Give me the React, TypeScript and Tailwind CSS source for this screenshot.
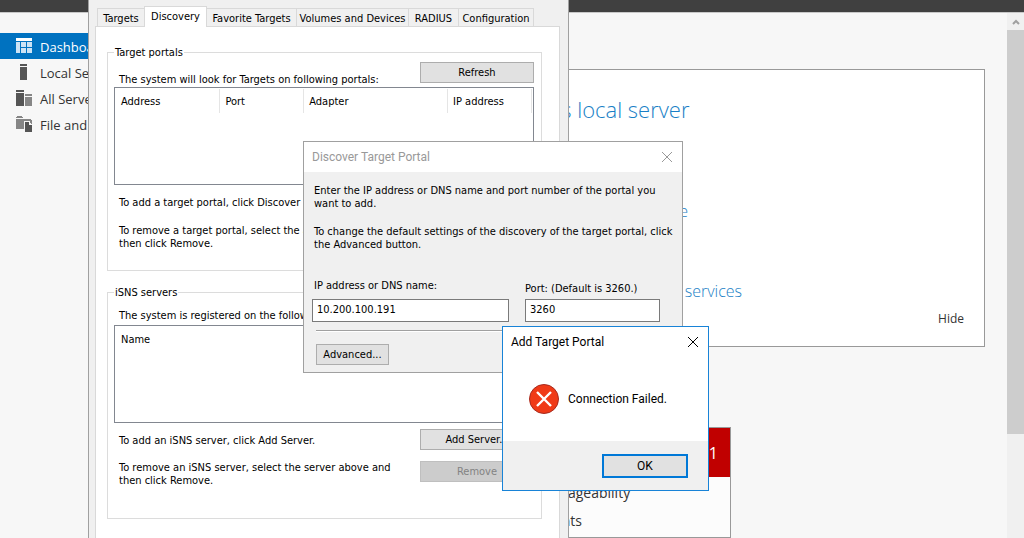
import type { ReactNode } from "react";

const navItems = [
  { label: "Dashboard", icon: "dashboard" },
  { label: "Local Server", icon: "server" },
  { label: "All Servers", icon: "servers" },
  { label: "File and Storage Services", icon: "files" },
];

const tabs = [
  { label: "Targets", width: "w-12" },
  { label: "Discovery", width: "w-[63px]" },
  { label: "Favorite Targets", width: "w-[91px]" },
  { label: "Volumes and Devices", width: "w-[113px]" },
  { label: "RADIUS", width: "w-[51px]" },
  { label: "Configuration", width: "w-[76px]" },
];

const portalColumns = [
  { label: "Address", width: "w-[104px]" },
  { label: "Port", width: "w-[84px]" },
  { label: "Adapter", width: "w-36" },
  { label: "IP address", width: "w-[84px]" },
];

const NavIcon = ({ name }: { name: string }) => (
  <svg className="shrink-0" width="16" height="16" viewBox="0 0 16 16" shapeRendering="crispEdges" aria-hidden="true">
    {name === "dashboard" && (
      <>
        <path fill="#fff" d="M0 0h16v3H0z" />
        <path fill="#cce3f5" d="M0 4h4v11H0zM5 4h5v5H5zM11 4h5v5h-5zM5 10h5v5H5zM11 10h5v5h-5z" />
      </>
    )}
    {name === "server" && <path fill="#555" d="M4 0h7v2H4zM4 3h7v13H4z" />}
    {name === "servers" && (
      <>
        <path fill="#555" d="M0 0h8v2H0zM0 3h8v13H0z" />
        <path fill="#868686" d="M9 4h7v2H9zM9 7h7v9H9z" />
      </>
    )}
    {name === "files" && (
      <>
        <path fill="#868686" d="M1 0h5v1h1v1H0V1h1zM0 3h8v10H0zM8 3h7v1h1v1H8z" />
        <path fill="#555" d="M9 6h4v3h3v7H9z" />
        <path fill="#868686" d="M14 5h2v3h-1V7h-1z" />
      </>
    )}
  </svg>
);

const CloseButton = ({ className }: { className: string }) => (
  <button type="button" aria-label="Close" className={className}>
    <svg width="12" height="12" viewBox="0 0 12 12" fill="none" stroke="currentColor">
      <path d="M1 1l10 10M11 1L1 11" />
    </svg>
  </button>
);

const Button = ({ children, className = "", disabled }: { children: ReactNode; className?: string; disabled?: boolean }) => (
  <button
    type="button"
    disabled={disabled}
    className={`border border-[#adadad] bg-[#e1e1e1] text-center disabled:border-[#bfbfbf] disabled:bg-[#cccccc] disabled:text-[#838383] ${className}`}
  >
    {children}
  </button>
);

const ServerManager = () => (
  <div className="flex h-full flex-col bg-[#f7f7f7] font-['Open_Sans',sans-serif] text-[#333]">
    <header className="h-[13px] border-b border-[#c8c8c8] bg-[#404040]" />
    <div className="flex min-h-0 flex-1">
      <nav className="w-48 shrink-0 pt-5 text-[13px]">
        {navItems.map((item, index) => (
          <a
            key={item.label}
            href="#"
            className={`flex h-[26px] items-center gap-2 pl-4 whitespace-nowrap ${index === 0 ? "bg-[#0072c0] text-white" : ""}`}
          >
            <NavIcon name={item.icon} />
            <span className="pt-0.5">{item.label}</span>
          </a>
        ))}
      </nav>
      <main className="min-w-0 flex-1 pt-14 pr-[22px] pl-4">
        <section className="flex h-[278px] flex-col border border-[#999] bg-white pt-[23px] pr-5 pl-[225px] text-[#1a7fc6]">
          <h1 className="text-[22px] leading-8 font-light whitespace-nowrap">Configure this local server</h1>
          <div className="flex flex-col gap-14 pt-[74px] pl-[45px] text-base leading-6 font-light whitespace-nowrap">
            <a href="#">Add other servers to manage</a>
            <a href="#">Connect this server to cloud services</a>
          </div>
          <button type="button" className="mt-1.5 self-end text-xs leading-5 text-[#333]">
            Hide
          </button>
        </section>
        <section className="mt-20 ml-[300px] w-[223px] border border-[#999] bg-[#fcfcfc]">
          <div className="flex h-[49px] items-center justify-end bg-[#c00000] pr-3 text-base text-white">1</div>
          <ul className="flex flex-col gap-2 py-1.5 pl-[30px] text-sm leading-5">
            <li>Manageability</li>
            <li>Events</li>
          </ul>
        </section>
      </main>
      <div className="w-[17px] shrink-0 bg-[#f0f0f0]">
        <div className="flex h-[17px] items-center justify-center">
          <svg width="8" height="6" viewBox="0 0 8 6" fill="none" stroke="#a0a0a0" strokeWidth="2">
            <path d="M1 5l3-3 3 3" />
          </svg>
        </div>
        <div className="h-[404px] bg-[#cdcdcd]" />
      </div>
    </div>
  </div>
);

const InitiatorWindow = () => (
  <section className="absolute inset-y-0 left-[88px] w-[481px] overflow-hidden border-x border-[#a0a0a0] bg-[#f0f0f0] pt-1.5 pr-2 pl-1.5">
    <div role="tablist" className="relative flex items-end pl-0.5">
      {tabs.map((tab) => (
        <button
          key={tab.label}
          type="button"
          role="tab"
          aria-selected={tab.label === "Discovery"}
          className={`-mr-px flex shrink-0 items-center justify-center border border-b-0 border-[#d9d9d9] whitespace-nowrap ${tab.width} ${
            tab.label === "Discovery" ? "relative z-10 -mb-px h-[21px] bg-white pb-0.5" : "h-[18px] pt-0.5"
          }`}
        >
          {tab.label}
        </button>
      ))}
    </div>
    <div className="flex h-[600px] flex-col gap-[15px] border border-[#d9d9d9] bg-white px-[11px] pt-[19px] pr-[17px]">
      <fieldset className="h-[225px] border border-[#dcdcdc] pr-[7px] pl-1.5">
        <legend className="px-px">Target portals</legend>
        <div className="flex items-start justify-between pt-[3px]">
          <p className="pt-[11px] pl-[5px]">The system will look for Targets on following portals:</p>
          <Button className="h-[21px] w-[114px]">Refresh</Button>
        </div>
        <div className="mt-px h-[98px] border border-[#828790] p-px">
          <table className="table-fixed border-collapse">
            <thead>
              <tr className="h-6">
                {portalColumns.map((column) => (
                  <th key={column.label} className={`border-r border-[#e5e5e5] pl-[5px] text-left font-normal ${column.width}`}>
                    {column.label}
                  </th>
                ))}
              </tr>
            </thead>
          </table>
        </div>
        <p className="pt-[11px] pl-[5px]">To add a target portal, click Discover Portal.</p>
        <p className="pt-[15px] pl-[5px]">
          To remove a target portal, select the address above and
          <br />
          then click Remove.
        </p>
      </fieldset>
      <fieldset className="h-[233px] border border-[#dcdcdc] pr-[7px] pl-1.5">
        <legend className="px-px">iSNS servers</legend>
        <p className="pt-2.5 pl-[5px]">The system is registered on the following iSNS servers:</p>
        <div className="mt-[3px] h-[98px] border border-[#828790] p-px">
          <table>
            <thead>
              <tr className="h-6">
                <th className="pl-[5px] text-left font-normal">Name</th>
              </tr>
            </thead>
          </table>
        </div>
        <div className="flex justify-between pt-1.5 pl-[5px]">
          <div className="flex flex-col gap-3.5 pt-[5px]">
            <p>To add an iSNS server, click Add Server.</p>
            <p>
              To remove an iSNS server, select the server above and
              <br />
              then click Remove.
            </p>
          </div>
          <div className="flex flex-col gap-[11px]">
            <Button className="h-[21px] w-[114px]">Add Server...</Button>
            <Button disabled className="h-[21px] w-[114px]">
              Remove
            </Button>
          </div>
        </div>
      </fieldset>
    </div>
  </section>
);

const PortalDialog = () => (
  <section role="dialog" aria-labelledby="portal-title" className="absolute top-[141px] left-[303px] h-[232px] w-[380px] border border-[#a0a0a0] bg-[#f0f0f0]">
    <header className="flex h-[30px] items-center justify-between bg-white pr-[9px] pl-2 text-[#999]">
      <h2 id="portal-title" className="font-['Roboto',sans-serif] text-xs">Discover Target Portal</h2>
      <CloseButton className="text-[#999]" />
    </header>
    <div className="flex flex-col px-2.5 pt-3">
      <p className="whitespace-nowrap">
        Enter the IP address or DNS name and port number of the portal you
        <br />
        want to add.
      </p>
      <p className="pt-[15px] whitespace-nowrap">
        To change the default settings of the discovery of the target portal, click
        <br />
        the Advanced button.
      </p>
      <div className="flex items-end gap-4 pt-7">
        <div className="-ml-0.5 flex flex-col gap-[7px]">
          <label htmlFor="address" className="pl-0.5">IP address or DNS name:</label>
          <input id="address" defaultValue="10.200.100.191" className="h-[23px] w-[197px] border border-[#7a7a7a] bg-white px-1 pb-0.5" />
        </div>
        <div className="flex flex-col gap-1">
          <label htmlFor="port">Port: (Default is 3260.)</label>
          <input id="port" defaultValue="3260" className="h-[23px] w-[135px] border border-[#7a7a7a] bg-white px-1 pb-0.5" />
        </div>
      </div>
      <hr className="mt-2 ml-0.5 h-0.5 border-t border-b border-t-[#a0a0a0] border-b-white" />
      <Button className="mt-3 ml-0.5 h-[21px] w-[73px]">Advanced...</Button>
    </div>
  </section>
);

const ErrorDialog = () => (
  <section role="alertdialog" aria-labelledby="error-title" className="absolute top-[326px] left-[502px] flex h-[165px] w-[207px] flex-col border border-[#1883d7] bg-white font-['Roboto',sans-serif] text-xs">
    <header className="flex h-[30px] items-center justify-between pr-[9px] pl-2">
      <h2 id="error-title">Add Target Portal</h2>
      <CloseButton className="text-black" />
    </header>
    <div className="flex flex-1 items-center gap-[9px] pl-[26px]">
      <svg width="30" height="30" viewBox="0 0 30 30" aria-hidden="true">
        <circle cx="15" cy="15" r="14.5" fill="#f03a17" stroke="#a62b1f" />
        <path d="M8 8l14 14M22 8L8 22" stroke="#fff" strokeWidth="2.4" />
      </svg>
      <p>Connection Failed.</p>
    </div>
    <footer className="flex h-[49px] items-center justify-end bg-[#f0f0f0] pr-5">
      <button type="button" className="h-6 w-[86px] border-2 border-[#0078d7] bg-[#e1e1e1]">OK</button>
    </footer>
  </section>
);

const App = () => (
  <div className="relative h-screen overflow-hidden font-['DejaVu_Sans_Condensed','DejaVu_Sans',sans-serif] text-[11px] leading-[13px] text-black">
    <ServerManager />
    <InitiatorWindow />
    <PortalDialog />
    <ErrorDialog />
  </div>
);

export default App;
